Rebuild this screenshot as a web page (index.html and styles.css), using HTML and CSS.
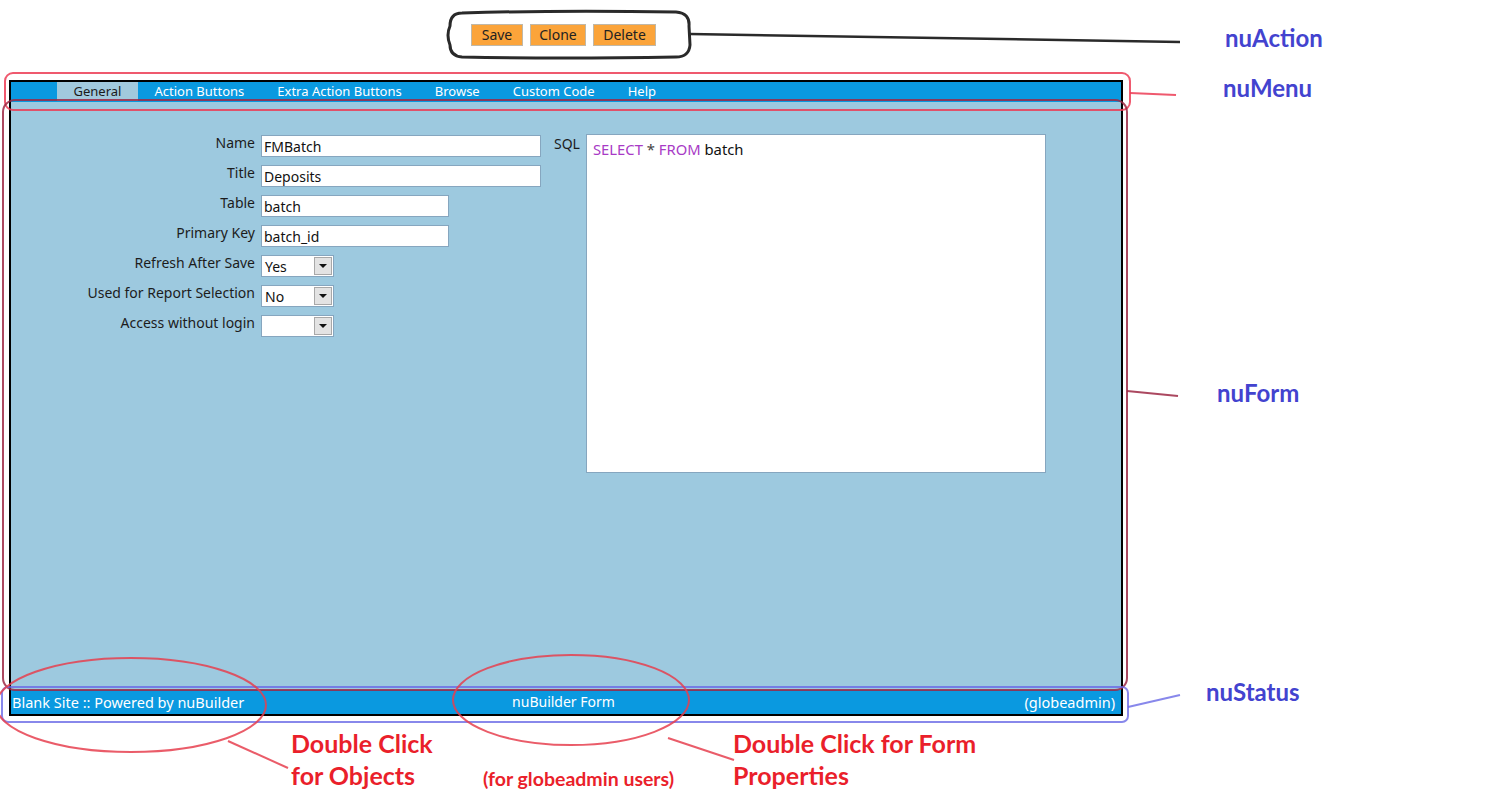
FILE: index.html
```html
<!DOCTYPE html>
<html>
<head>
<meta charset="utf-8">
<title>nuBuilder Form</title>
<link rel="stylesheet" href="styles.css">
</head>
<body>
<div class="page">
  <div class="actionbar">
    <button class="btn btn-save">Save</button>
    <button class="btn btn-clone">Clone</button>
    <button class="btn btn-delete">Delete</button>
  </div>

  <div class="window">
    <div class="menu">
      <span class="tab active">General</span>
      <span class="tab">Action Buttons</span>
      <span class="tab">Extra Action Buttons</span>
      <span class="tab">Browse</span>
      <span class="tab">Custom Code</span>
      <span class="tab">Help</span>
    </div>

    <div class="form">
      <div class="fields">
        <label class="lbl">Name</label>
        <input class="in in-wide" value="FMBatch">
        <label class="lbl">Title</label>
        <input class="in in-wide" value="Deposits">
        <label class="lbl">Table</label>
        <input class="in in-mid" value="batch">
        <label class="lbl">Primary Key</label>
        <input class="in in-mid" value="batch_id">
        <label class="lbl">Refresh After Save</label>
        <div class="sel"><span class="sel-val">Yes</span><span class="sel-btn"><span class="tri"></span></span></div>
        <label class="lbl">Used for Report Selection</label>
        <div class="sel"><span class="sel-val">No</span><span class="sel-btn"><span class="tri"></span></span></div>
        <label class="lbl">Access without login</label>
        <div class="sel"><span class="sel-val"></span><span class="sel-btn"><span class="tri"></span></span></div>
      </div>
      <div class="sql">
        <label class="lbl">SQL</label>
        <div class="code"><span class="kw">SELECT</span> <span class="op">*</span> <span class="kw">FROM</span> batch</div>
      </div>
    </div>

    <div class="status">
      <span class="st-left">Blank Site :: Powered by nuBuilder</span>
      <span class="st-mid">nuBuilder Form</span>
      <span class="st-right">(globeadmin)</span>
    </div>
  </div>

  <svg class="marks" width="1493" height="806" viewBox="0 0 1493 806">
    <path class="m-black" d="M462 13 Q560 10 676 12 Q690 13 689 26 L690 45 Q689 57 676 57 Q560 59 462 57 Q450 56 450 45 Q446 35 450 26 Q450 13 462 13 Z"/>
    <path class="m-black thin" d="M690 34 L1180 42"/>
    <rect class="m-red" x="5" y="73" width="1125" height="37" rx="8"/>
    <path class="m-red" d="M1130 93 L1176 95"/>
    <rect class="m-dred" x="3" y="100" width="1124" height="590" rx="12"/>
    <path class="m-dred" d="M1127 391 L1178 396"/>
    <rect class="m-blue" x="2" y="687" width="1126" height="35" rx="6"/>
    <path class="m-blue" d="M1128 707 L1180 695"/>
    <ellipse class="m-red2" cx="131" cy="705" rx="135" ry="47"/>
    <path class="m-red2" d="M228 741 L288 768"/>
    <ellipse class="m-red2" cx="571" cy="700" rx="118" ry="45"/>
    <path class="m-red2" d="M668 738 L734 760"/>
  </svg>

  <div class="note blue n-action">nuAction</div>
  <div class="note blue n-menu">nuMenu</div>
  <div class="note blue n-form">nuForm</div>
  <div class="note blue n-status">nuStatus</div>
  <div class="note red n-obj">Double Click<br>for Objects</div>
  <div class="note red small n-admin">(for globeadmin users)</div>
  <div class="note red n-props">Double Click for Form<br>Properties</div>
</div>
</body>
</html>
```

FILE: styles.css
```css
html, body {
  margin: 0;
  padding: 0;
  background: #ffffff;
}

.page {
  position: relative;
  width: 1493px;
  height: 806px;
  overflow: hidden;
  font-family: "Noto Sans", "DejaVu Sans", sans-serif;
}

/* nuAction */
.actionbar {
  height: 80px;
  box-sizing: border-box;
  padding: 24px 0 0 471px;
  display: flex;
  gap: 7px;
  align-items: flex-start;
}

.btn {
  box-sizing: border-box;
  height: 22px;
  padding: 0;
  margin: 0;
  background: #fba43a;
  border: 1px solid #c0b8a8;
  border-radius: 0;
  font-family: "Noto Sans", "DejaVu Sans", sans-serif;
  font-size: 14px;
  color: #222222;
  line-height: 20px;
  text-align: center;
}

.btn-save { width: 52px; }
.btn-clone { width: 56px; }
.btn-delete { width: 63px; }

/* window */
.window {
  margin-left: 9px;
  width: 1114px;
  height: 636px;
  box-sizing: border-box;
  border: 2px solid #000000;
  display: flex;
  flex-direction: column;
}

.menu {
  height: 20px;
  flex: none;
  background: #0a99e0;
  display: flex;
  padding-left: 46px;
  font-size: 13px;
  line-height: 19px;
  color: #ffffff;
}

.tab {
  padding: 0 16.5px;
  white-space: nowrap;
}

.tab.active {
  background: #a1c9dd;
  color: #1a1a1a;
  height: 19px;
}

.form {
  flex: 1;
  background: #9dc9df;
  display: flex;
  align-items: flex-start;
  padding-top: 33px;
  box-sizing: border-box;
}

.fields {
  display: grid;
  grid-template-columns: 244px auto;
  column-gap: 6px;
  row-gap: 8px;
  align-items: start;
}

.lbl {
  display: block;
  text-align: right;
  font-size: 14px;
  line-height: 15px;
  color: #1c1c1c;
  white-space: nowrap;
}

.in {
  box-sizing: border-box;
  height: 22px;
  margin: 0;
  padding: 0 2px;
  border: 1px solid #86a6bf;
  border-radius: 0;
  background: #ffffff;
  font-family: "Noto Sans", "DejaVu Sans", sans-serif;
  font-size: 14px;
  color: #111111;
  outline: none;
}

.in-wide { width: 280px; }
.in-mid { width: 188px; }

.sel {
  box-sizing: border-box;
  width: 73px;
  height: 22px;
  border: 1px solid #86a6bf;
  background: #ffffff;
  display: flex;
  align-items: center;
  justify-content: space-between;
  padding: 1px 1px 1px 3px;
}

.sel-val {
  font-size: 14px;
  color: #111111;
  line-height: 18px;
  padding-top: 2px;
}

.sel-btn {
  box-sizing: border-box;
  width: 18px;
  height: 18px;
  background: #e3e3e3;
  border: 1px solid #a8a8a8;
  display: flex;
  align-items: center;
  justify-content: center;
}

.tri {
  width: 0;
  height: 0;
  border-left: 4px solid transparent;
  border-right: 4px solid transparent;
  border-top: 4px solid #111111;
}

.sql {
  display: flex;
  align-items: flex-start;
  margin-left: 13px;
  gap: 6px;
}

.sql .lbl {
  padding-top: 1px;
}

.code {
  box-sizing: border-box;
  width: 460px;
  height: 339px;
  margin-top: -1px;
  background: #ffffff;
  border: 1px solid #86a6bf;
  padding: 6px 6px;
  font-size: 14.8px;
  line-height: 16px;
  color: #111111;
}

.kw { color: #a83ac6; }
.op { color: #444444; }

.status {
  height: 24px;
  flex: none;
  background: #0a99e0;
  display: grid;
  grid-template-columns: 1fr auto 1fr;
  align-items: center;
  padding: 0 6px 0 1px;
  font-size: 14.5px;
  line-height: 22px;
  color: #ffffff;
}

.st-mid { font-size: 14px; }
.st-right { text-align: right; }

/* annotations */
.marks {
  position: absolute;
  left: 0;
  top: 0;
  pointer-events: none;
  fill: none;
}

.m-black { stroke: #2a2a2a; stroke-width: 3; stroke-linejoin: round; }
.m-black.thin { stroke-width: 2.5; }
.m-red { stroke: #ec3c55; stroke-width: 2; opacity: 0.85; }
.m-dred { stroke: #9c2844; stroke-width: 2; opacity: 0.85; }
.m-blue { stroke: #6a6ae6; stroke-width: 2; opacity: 0.8; }
.m-red2 { stroke: #e6404f; stroke-width: 2; opacity: 0.85; }

.note {
  position: absolute;
  font-family: Lato, "Liberation Sans", sans-serif;
  font-weight: 700;
  font-size: 24px;
  line-height: 1;
  white-space: nowrap;
}

.note.blue { color: #4343cf; }
.note.red { color: #ea1f2b; font-size: 25px; line-height: 32px; }
.note.small { font-size: 19.5px; line-height: 1; }

.n-action { left: 1225px; top: 26px; }
.n-menu { left: 1223px; top: 76px; }
.n-form { left: 1217px; top: 381px; }
.n-status { left: 1206px; top: 680px; }
.n-obj { left: 291px; top: 727px; }
.n-admin { left: 483px; top: 769px; }
.n-props { left: 733px; top: 727px; }
```
